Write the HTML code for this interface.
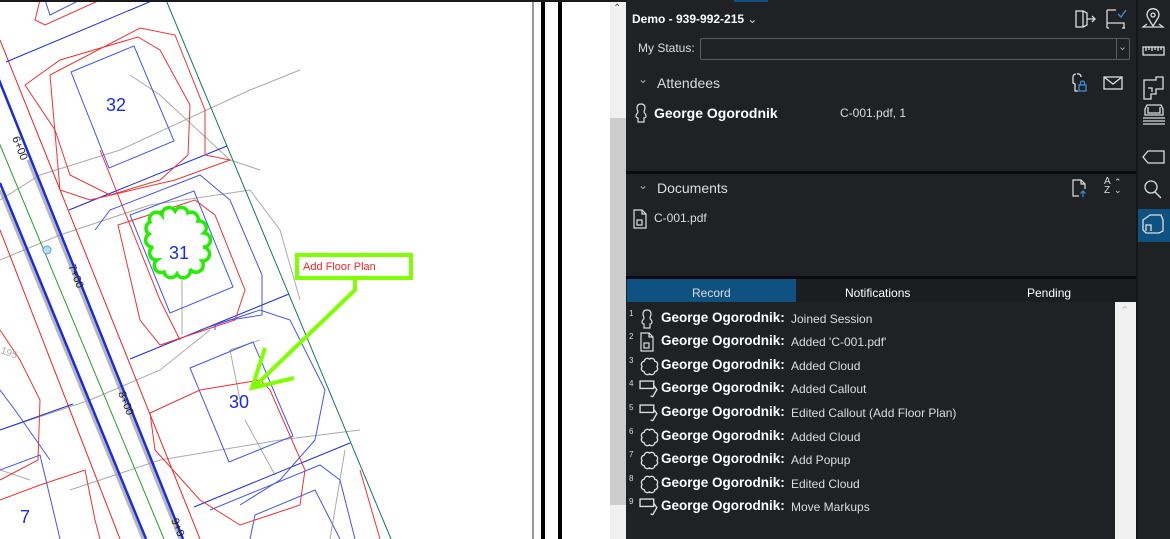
<!DOCTYPE html>
<html><head><meta charset="utf-8"><style>
*{margin:0;padding:0;box-sizing:border-box}
body{width:1170px;height:539px;overflow:hidden;background:#1f2125;font-family:"Liberation Sans",sans-serif;position:relative;color:#ddd}
.a{position:absolute}
.t{position:absolute;white-space:nowrap}
.row{position:absolute;left:626px;height:23px;width:490px}
.row .n{position:absolute;left:3px;top:1px;font-size:8px;color:#ddd}
.row .i{position:absolute;left:13px;top:1px}
.row .nm{position:absolute;left:35px;top:2px;font-size:13.5px;font-weight:bold;color:#fff}
.row .ac{position:absolute;left:165px;top:4px;font-size:12px;color:#ddd}
</style></head><body>
<div class="a" style="left:0;top:0;width:626px;height:539px;background:#fff"></div>
<svg class="a" style="left:0;top:0" width="532" height="539" viewBox="0 0 532 539">
<g fill="none" stroke-width="1">
<g stroke="#aaa">
<polyline points="0,200 40,175 120,150 250,90 300,70"/>
<polyline points="130,75 160,95 230,160 260,170"/>
<polyline points="0,260 60,235 150,205 250,190 280,230 300,300"/>
<polyline points="0,430 90,400 160,370 210,330"/>
<polyline points="240,400 230,350 260,340"/>
<polyline points="182,280 182,335"/>
<polyline points="70,490 160,460 280,440 360,430"/>
<polyline points="245,420 275,475"/>
<polyline points="345,450 330,539"/>
<polyline points="0,470 30,480"/>
</g>
<g stroke="#999" stroke-width="3" opacity=".7">
<line x1="0" y1="190" x2="143" y2="539"/>
<line x1="28" y1="160" x2="180" y2="539"/>
</g>
<line x1="0" y1="183" x2="146" y2="539" stroke="#1a2be0" stroke-width="2.5"/>
<line x1="-33" y1="0" x2="183" y2="539" stroke="#1a2be0" stroke-width="2.5"/>
<line x1="-52" y1="20" x2="164" y2="539" stroke="#22a022"/>
<line x1="0" y1="40" x2="200" y2="539" stroke="#ee2222"/>
<line x1="0" y1="230" x2="120" y2="539" stroke="#ee2222"/>
<line x1="166" y1="0" x2="391" y2="539" stroke="#117766"/>
<circle cx="47" cy="250" r="4" stroke="#4aa0e0" fill="#bde"/>
<g stroke="#1a2be0">
<line x1="6" y1="62" x2="154" y2="0"/>
<line x1="69" y1="210" x2="227" y2="146"/>
<line x1="130" y1="359" x2="289" y2="294"/>
<line x1="0" y1="430" x2="73" y2="404"/>
<line x1="194" y1="507" x2="350" y2="443"/>
</g>
<g stroke="#4455ee">
<polygon points="71,72 134,46 174,141 109,168"/>
<polygon points="130,215 194,191 233,287 170,313"/>
<polygon points="190,368 253,342 293,436 229,462"/>
<polyline points="95,230 110,210 200,175 230,200 262,275 262,315 230,320 215,325 215,330"/>
<polyline points="200,330 260,310 290,320 325,390 315,440 280,480 240,505"/>
<polyline points="210,510 320,465 340,480 355,539"/>
<polyline points="250,539 255,515 315,490 340,539"/>
<polyline points="0,390 15,410 50,460"/>
<polyline points="0,470 40,455 60,539"/>
<polyline points="45,0 50,15 80,0"/>
</g>
<g stroke="#ee3333">
<polyline points="40,0 35,20 45,25 100,0"/>
<polygon points="25,85 60,60 138,37 160,50 190,105 188,155 160,180 110,195 70,175 55,130"/>
<polygon points="50,75 140,28 175,35 205,110 205,155 230,160 175,180 90,200 60,190"/>
<polygon points="118,225 195,200 215,215 245,290 235,320 160,345 140,320"/>
<polygon points="150,413 200,390 260,380 270,390 305,470 300,505 240,525 200,500 155,450"/>
<polyline points="0,330 20,360 40,400 38,460 0,480"/>
<polyline points="0,500 40,485 85,470 95,520 100,539"/>
<polyline points="360,470 380,539"/>
<polyline points="100,150 140,250 160,300 180,340"/>
</g>
</g>
<g fill="none" stroke="#22ee00" stroke-width="3.5">
<path d="M150,222 a7,7 0 0 1 12,-7 a7,7 0 0 1 13,-4 a7,7 0 0 1 13,2 a7,7 0 0 1 10,8 a7,7 0 0 1 6,12 a7,7 0 0 1 -1,14 a7,7 0 0 1 -1,14 a7,7 0 0 1 -12,8 a7,7 0 0 1 -13,5 a7,7 0 0 1 -13,-2 a7,7 0 0 1 -7,-12 a7,7 0 0 1 -4,-13 a7,7 0 0 1 -4,-13 a7,7 0 0 1 1,-12z"/>
</g>
<rect x="297" y="255" width="114" height="23" fill="#fff" stroke="#7fff00" stroke-width="4"/>
<polyline points="355,279 355,290 255,386" fill="none" stroke="#7fff00" stroke-width="4"/>
<polyline points="265,348 252,388 294,378" fill="none" stroke="#7fff00" stroke-width="4"/>
<text x="303" y="270" font-size="11" fill="#ff2222" font-family="Liberation Sans">Add Floor Plan</text>
<g font-family="Liberation Sans" fill="#1a2be0" font-size="18">
<text x="106" y="111">32</text><text x="169" y="259">31</text><text x="229" y="408">30</text><text x="20" y="523">7</text>
</g>
<g font-family="Liberation Sans" fill="#222" font-size="11">
<text transform="translate(12,138) rotate(68)">6+00</text>
<text transform="translate(68,266) rotate(68)">7+00</text>
<text transform="translate(118,393) rotate(68)">8+00</text>
<text transform="translate(171,520) rotate(68)">9+0</text>
</g>
<text x="0" y="353" font-size="10" fill="#aaa" font-family="Liberation Sans" transform="rotate(20 0 353)">195</text>
</svg>
<div class="a" style="left:532px;top:0;width:2px;height:539px;background:#999"></div>
<div class="a" style="left:541px;top:0;width:4px;height:539px;background:#000"></div>
<div class="a" style="left:558px;top:0;width:4px;height:539px;background:#000"></div>
<div class="a" style="left:610px;top:0;width:16px;height:539px;background:#f0f0f0"></div>
<div class="a" style="left:610px;top:118px;width:16px;height:387px;background:#cdcdcd"></div>
<div class="t" style="left:613px;top:3px;font-size:10px;color:#555">&#8963;</div>
<div class="a" style="left:0;top:0;width:626px;height:2px;background:#1a1a1a"></div>
<div class="a" style="left:734px;top:0;width:34px;height:2px;background:#0e5282"></div>
<div class="t" style="left:632px;top:12px;font-size:12px;font-weight:bold;color:#fff">Demo - 939-992-215 <span style="font-weight:normal;color:#ccc">&#8964;</span></div>
<svg class="a" style="left:1074px;top:9px" width="24" height="20" viewBox="0 0 24 20" fill="none" stroke="#ddd" stroke-width="1.3"><rect x="2" y="2" width="7" height="16"/><path d="M9 2l4 2v12l-4 2M13 10h8M18 7l3 3-3 3"/></svg>
<svg class="a" style="left:1104px;top:8px" width="24" height="22" viewBox="0 0 24 22" fill="none" stroke="#ddd" stroke-width="1.3"><path d="M3 2v18M3 15h17v5M3 20h2M18 20h3M3 2h9"/><path d="M14 6l3 3 5-7" stroke="#3a8fe0"/></svg>
<div class="t" style="left:638px;top:41px;font-size:12px;color:#ddd">My Status:</div>
<div class="a" style="left:700px;top:38px;width:430px;height:22px;border:1px solid #5a5c60;border-radius:2px"></div>
<div class="a" style="left:1116px;top:39px;width:1px;height:20px;background:#5a5c60"></div>
<div class="t" style="left:1118px;top:40px;font-size:11px;color:#aaa">&#8964;</div>
<div class="t" style="left:638px;top:72px;font-size:12px;color:#aaa">&#8964;</div>
<div class="t" style="left:657px;top:75px;font-size:14px;color:#ddd">Attendees</div>
<svg class="a" style="left:1070px;top:72px" width="20" height="22" viewBox="0 0 20 22" fill="none" stroke-width="1.3"><path d="M6 2a3 3 0 0 0-3 3v6l2 1v7h3" stroke="#ddd"/><path d="M7 2a3 3 0 0 1 4 3" stroke="#ddd"/><rect x="9" y="13" width="7" height="6" stroke="#3a8fe0"/><path d="M10.5 13v-2a2 2 0 0 1 4 0v2" stroke="#3a8fe0"/></svg>
<svg class="a" style="left:1103px;top:76px" width="20" height="14" viewBox="0 0 20 14" fill="none" stroke="#ddd" stroke-width="1.3"><rect x="1" y="1" width="18" height="12"/><path d="M1 1l9 7 9-7"/></svg>
<svg class="a" style="left:634px;top:102px" width="14" height="22" viewBox="0 0 14 22" fill="none" stroke="#ddd" stroke-width="1.2"><path d="M7 2c-3 0-4 2-4 4s1 3 1 4-2 2-2 4 2 2 2 2v4h6v-4s2 0 2-2-2-3-2-4 1-2 1-4-1-4-4-4z"/></svg>
<div class="t" style="left:654px;top:105px;font-size:14px;font-weight:bold;color:#fff">George Ogorodnik</div>
<div class="t" style="left:840px;top:106px;font-size:12px;color:#ddd">C-001.pdf, 1</div>
<div class="a" style="left:626px;top:171px;width:510px;height:3px;background:#0c0c0d"></div>
<div class="t" style="left:638px;top:178px;font-size:12px;color:#aaa">&#8964;</div>
<div class="t" style="left:657px;top:180px;font-size:14px;color:#ddd">Documents</div>
<svg class="a" style="left:1071px;top:178px" width="16" height="20" viewBox="0 0 16 20" fill="none" stroke="#ddd" stroke-width="1.2"><path d="M8 18H2V2h8l4 4v5M10 2v4h4"/><path d="M12 19v-6M9.5 15.5L12 13l2.5 2.5" stroke="#3a8fe0"/></svg>
<div class="t" style="left:1104px;top:177px;font-size:10px;color:#ddd;line-height:9px">A<br>Z</div>
<div class="t" style="left:1114px;top:178px;font-size:9px;color:#ddd;line-height:8px">&#8963;<br>&#8964;</div>
<svg class="a" style="left:633px;top:209px" width="14" height="20" viewBox="0 0 14 20" fill="none" stroke="#ddd" stroke-width="1.2"><path d="M1 1h8l4 4v14H1z M9 1v4h4"/><rect x="4" y="11" width="5" height="5"/></svg>
<div class="t" style="left:654px;top:211px;font-size:12px;color:#ddd">C-001.pdf</div>
<div class="a" style="left:626px;top:276px;width:510px;height:3px;background:#0c0c0d"></div>
<div class="a" style="left:626px;top:279px;width:510px;height:23px;background:#1b1d20"></div>
<div class="a" style="left:627px;top:279px;width:169px;height:23px;background:#0e5282"></div>
<div class="t" style="left:692px;top:286px;font-size:12px;color:#ddd">Record</div>
<div class="t" style="left:845px;top:286px;font-size:12px;color:#fff">Notifications</div>
<div class="t" style="left:1027px;top:286px;font-size:12px;color:#fff">Pending</div>
<div class="a" style="left:1115px;top:302px;width:21px;height:237px;background:#f0f0f0"></div>
<div class="t" style="left:1120px;top:304px;font-size:11px;color:#bbb">&#8963;</div>
<div class="a" style="left:1136px;top:0;width:2px;height:539px;background:#151618"></div>

<svg width="0" height="0" style="position:absolute"><defs><symbol id="cl" viewBox="0 0 20 20"><path d="M5 5a3 3 0 0 1 5-2a3 3 0 0 1 5 2a3 3 0 0 1 2 5a3 3 0 0 1-2 5a3 3 0 0 1-5 2a3 3 0 0 1-5-2a3 3 0 0 1-2-5a3 3 0 0 1 2-5z" fill="none" stroke="#ddd" stroke-width="1.2"/></symbol><symbol id="co" viewBox="0 0 20 20"><path d="M1 2h13v7H1z M14 6l3 4-4 7 M13 17l-2-1" fill="none" stroke="#ddd" stroke-width="1.3"/></symbol></defs></svg>
<div class="row" style="top:308px"><span class="n">1</span><svg class="i" width="16" height="20" viewBox="0 0 14 20" fill="none" stroke="#ddd" stroke-width="1.2"><path d="M7 1c-3 0-4 2-4 4s1 3 1 4-2 2-2 4 2 2 2 2v4h6v-4s2 0 2-2-2-3-2-4 1-2 1-4-1-4-4-4z"/></svg><span class="nm">George Ogorodnik:</span><span class="ac">Joined Session</span></div>
<div class="row" style="top:331px"><span class="n">2</span><svg class="i" width="16" height="20" viewBox="0 0 14 20" fill="none" stroke="#ddd" stroke-width="1.2"><path d="M1 1h8l4 4v14H1z M9 1v4h4"/><rect x="4" y="11" width="5" height="5"/></svg><span class="nm">George Ogorodnik:</span><span class="ac">Added 'C-001.pdf'</span></div>
<div class="row" style="top:355px"><span class="n">3</span><svg class="i" width="21" height="21"><use href="#cl"/></svg><span class="nm">George Ogorodnik:</span><span class="ac">Added Cloud</span></div>
<div class="row" style="top:378px"><span class="n">4</span><svg class="i" width="21" height="21"><use href="#co"/></svg><span class="nm">George Ogorodnik:</span><span class="ac">Added Callout</span></div>
<div class="row" style="top:402px"><span class="n">5</span><svg class="i" width="21" height="21"><use href="#co"/></svg><span class="nm">George Ogorodnik:</span><span class="ac">Edited Callout (Add Floor Plan)</span></div>
<div class="row" style="top:426px"><span class="n">6</span><svg class="i" width="21" height="21"><use href="#cl"/></svg><span class="nm">George Ogorodnik:</span><span class="ac">Added Cloud</span></div>
<div class="row" style="top:449px"><span class="n">7</span><svg class="i" width="21" height="21"><use href="#cl"/></svg><span class="nm">George Ogorodnik:</span><span class="ac">Add Popup</span></div>
<div class="row" style="top:473px"><span class="n">8</span><svg class="i" width="21" height="21"><use href="#cl"/></svg><span class="nm">George Ogorodnik:</span><span class="ac">Edited Cloud</span></div>
<div class="row" style="top:496px"><span class="n">9</span><svg class="i" width="21" height="21"><use href="#co"/></svg><span class="nm">George Ogorodnik:</span><span class="ac">Move Markups</span></div>

<div class="a" style="left:1138px;top:209px;width:32px;height:33px;background:#0e5282"></div>
<svg class="a" style="left:1138px;top:0" width="32" height="242" fill="none" stroke="#ddd" stroke-width="1.3">
<path d="M15 26l-5-8a6 6 0 1 1 10 0z"/><circle cx="15" cy="15" r="2"/><path d="M9 24l-4 3h20l-4-3"/>
<rect x="5" y="47" width="21" height="8"/><path d="M8 47v4M11 47v3M14 47v4M17 47v3M20 47v4M23 47v3"/>
<path d="M6 80h12v-3h7v12h-7v5h-5v5H6z M10 88h4v4"/>
<path d="M7 115h18v-6l-2-4H9l-2 4z M10 107v6h12v-6 M5 118h22M5 121h22M5 124h22"/>
<path d="M5 157l5-6h16v12H10z"/>
<circle cx="13" cy="187" r="6"/><path d="M17 192l6 6"/>
<path d="M5 220l7-5h11l2 5v11l-4 2H8l-3-3z M8 231v-6h5v6"/>
</svg>
</body></html>
